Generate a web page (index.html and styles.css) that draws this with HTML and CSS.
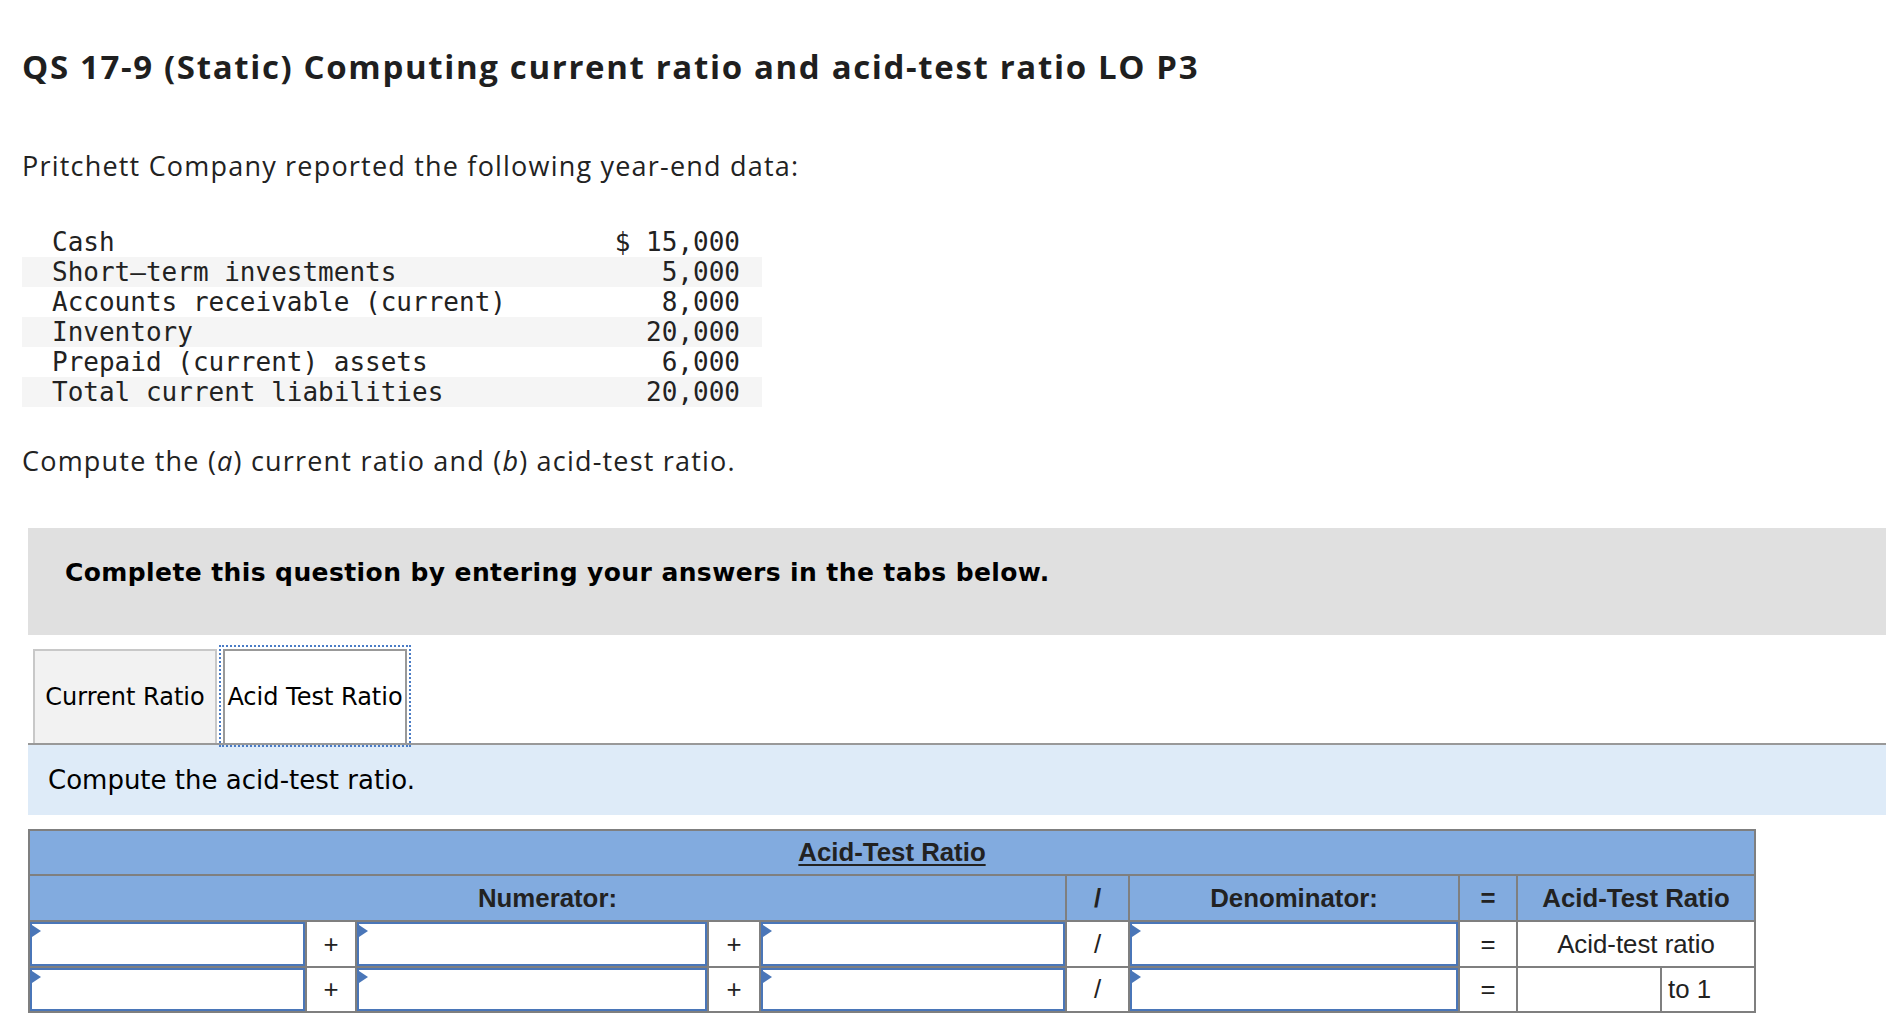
FILE: index.html
```html
<!DOCTYPE html>
<html>
<head>
<meta charset="utf-8">
<title>QS 17-9</title>
<link rel="stylesheet" href="styles.css">
</head>
<body>
<div class="intro">
  <h1 class="title">QS 17-9 (Static) Computing current ratio and acid-test ratio LO P3</h1>
  <p class="lead">Pritchett Company reported the following year-end data:</p>
  <table class="data">
    <tr><td class="lbl">Cash</td><td class="amt">$ 15,000</td></tr>
    <tr class="alt"><td class="lbl">Short–term investments</td><td class="amt">5,000</td></tr>
    <tr><td class="lbl">Accounts receivable (current)</td><td class="amt">8,000</td></tr>
    <tr class="alt"><td class="lbl">Inventory</td><td class="amt">20,000</td></tr>
    <tr><td class="lbl">Prepaid (current) assets</td><td class="amt">6,000</td></tr>
    <tr class="alt"><td class="lbl">Total current liabilities</td><td class="amt">20,000</td></tr>
  </table>
  <p class="lead compute">Compute the (<i>a</i>) current ratio and (<i>b</i>) acid-test ratio.</p>
</div>
<div class="work">
  <div class="notice">Complete this question by entering your answers in the tabs below.</div>
  <div class="tabs">
    <div class="tab">Current Ratio</div>
    <div class="tab active">Acid Test Ratio</div>
  </div>
  <div class="prompt">Compute the acid-test ratio.</div>
  <div class="grid">
    <div class="cell hd span-all"><span class="u">Acid-Test Ratio</span></div>
    <div class="cell hd span-num">Numerator:</div>
    <div class="cell hd">/</div>
    <div class="cell hd">Denominator:</div>
    <div class="cell hd">=</div>
    <div class="cell hd span-res">Acid-Test Ratio</div>

    <div class="cell inp"></div>
    <div class="cell op">+</div>
    <div class="cell inp"></div>
    <div class="cell op">+</div>
    <div class="cell inp"></div>
    <div class="cell op">/</div>
    <div class="cell inp"></div>
    <div class="cell op">=</div>
    <div class="cell op span-res">Acid-test ratio</div>

    <div class="cell inp"></div>
    <div class="cell op">+</div>
    <div class="cell inp"></div>
    <div class="cell op">+</div>
    <div class="cell inp"></div>
    <div class="cell op">/</div>
    <div class="cell inp"></div>
    <div class="cell op">=</div>
    <div class="cell op"></div>
    <div class="cell to">to 1</div>
  </div>
</div>
</body>
</html>
```

FILE: styles.css
```css
html, body {
  margin: 0;
  padding: 0;
  background: #fff;
}

body {
  overflow: hidden;
  color: #222;
}

.intro {
  padding: 47px 0 0 22px;
}

.title {
  margin: 0;
  font-family: "Open Sans", Lato, sans-serif;
  font-weight: 700;
  font-size: 33px;
  line-height: 1.2;
  letter-spacing: 1.65px;
  color: #1f1f1f;
  white-space: nowrap;
}

.lead {
  margin: 0;
  font-family: "Open Sans", Lato, sans-serif;
  font-size: 27px;
  line-height: 1.2;
  letter-spacing: 1.2px;
  color: #222;
  white-space: nowrap;
}

.title + .lead {
  margin-top: 63px;
}

.data {
  border-collapse: collapse;
  margin-top: 45px;
  width: 740px;
  font-family: "DejaVu Sans Mono", monospace;
  font-size: 26px;
  line-height: 30px;
  color: #222;
}

.data td {
  padding: 0;
  height: 30px;
  white-space: pre;
}

.data .lbl {
  padding-left: 30px;
  text-align: left;
}

.data .amt {
  padding-right: 22px;
  text-align: right;
}

.data .alt td {
  background: #f5f5f5;
}

.compute {
  margin-top: 38px;
}

.work {
  margin-top: 51px;
  padding-left: 28px;
}

.notice {
  box-sizing: border-box;
  height: 107px;
  padding: 30px 0 0 37px;
  background: #e0e0e0;
  font-family: "DejaVu Sans", Verdana, sans-serif;
  font-weight: 700;
  font-size: 25px;
  line-height: 1.2;
  letter-spacing: 0.4px;
  color: #000;
}

.tabs {
  display: flex;
  gap: 6px;
  margin-top: 14px;
  padding-left: 5px;
  border-bottom: 2px solid #999;
}

.tab {
  box-sizing: border-box;
  width: 184px;
  height: 94px;
  display: flex;
  align-items: center;
  justify-content: center;
  border: 2px solid #c8c8c8;
  border-bottom: 0;
  background: #f2f2f2;
  font-family: "DejaVu Sans", Verdana, sans-serif;
  font-size: 24px;
  color: #000;
  white-space: nowrap;
}

.tab.active {
  background: #fff;
  border-color: #999;
  outline: 2px dotted #4a7cc6;
  outline-offset: 2px;
}

.prompt {
  box-sizing: border-box;
  height: 70px;
  padding: 20px 0 0 20px;
  background: #deebf8;
  font-family: "DejaVu Sans", Verdana, sans-serif;
  font-size: 26px;
  line-height: 1.2;
  color: #000;
}

.grid {
  display: grid;
  grid-template-columns: 275px 48px 350px 50px 304px 61px 328px 56px 142px 92px;
  grid-template-rows: 43px 44px 44px 43px;
  gap: 2px;
  padding: 2px;
  width: max-content;
  margin-top: 14px;
  background: #7f7f7f;
  font-family: "Liberation Sans", Arial, sans-serif;
  font-size: 25.8px;
  color: #222;
}

.cell {
  display: flex;
  align-items: center;
  justify-content: center;
  background: #fff;
  white-space: nowrap;
}

.hd {
  background: #82abdf;
  font-weight: 700;
}

.span-all {
  grid-column: 1 / -1;
}

.span-num {
  grid-column: 1 / 6;
}

.span-res {
  grid-column: 9 / 11;
}

.u {
  text-decoration: underline;
  text-underline-offset: 3px;
  text-decoration-thickness: 2px;
}

.inp {
  position: relative;
  box-sizing: border-box;
  border: 2px solid #4a76b8;
}

.inp::before {
  content: "";
  position: absolute;
  top: 1px;
  left: 0;
  border-left: 9px solid #4a76b8;
  border-top: 6px solid transparent;
  border-bottom: 6px solid transparent;
}

.to {
  justify-content: flex-start;
  padding-left: 6px;
}
```
